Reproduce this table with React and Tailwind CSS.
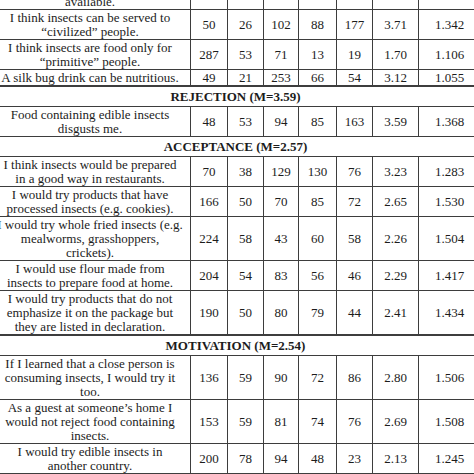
const cols = 'grid grid-cols-[201px_37px_36px_35px_38px_36px_46px_62px]';

const sections = [
  {
    rows: [
      { text: ['\u00a0', '\u00a0', 'available.'], nums: ['', '', '', '', '', '', ''] },
      { text: ['I think insects can be served to', '“civilized” people.'], nums: ['50', '26', '102', '88', '177', '3.71', '1.342'] },
      { text: ['I think insects are food only for', '“primitive” people.'], nums: ['287', '53', '71', '13', '19', '1.70', '1.106'] },
      { text: ['A silk bug drink can be nutritious.'], nums: ['49', '21', '253', '66', '54', '3.12', '1.055'], thick: true },
    ],
  },
  {
    title: 'REJECTION (M=3.59)',
    rows: [
      { text: ['Food containing edible insects', 'disgusts me.'], nums: ['48', '53', '94', '85', '163', '3.59', '1.368'] },
    ],
  },
  {
    title: 'ACCEPTANCE (M=2.57)',
    rows: [
      { text: ['I think insects would be prepared', 'in a good way in restaurants.'], nums: ['70', '38', '129', '130', '76', '3.23', '1.283'] },
      { text: ['I would try products that have', 'processed insects (e.g. cookies).'], nums: ['166', '50', '70', '85', '72', '2.65', '1.530'] },
      { text: ['I would try whole fried insects (e.g.', 'mealworms, grasshoppers,', 'crickets).'], nums: ['224', '58', '43', '60', '58', '2.26', '1.504'] },
      { text: ['I would use flour made from', 'insects to prepare food at home.'], nums: ['204', '54', '83', '56', '46', '2.29', '1.417'] },
      { text: ['I would try products that do not', 'emphasize it on the package but', 'they are listed in declaration.'], nums: ['190', '50', '80', '79', '44', '2.41', '1.434'], thick: true },
    ],
  },
  {
    title: 'MOTIVATION (M=2.54)',
    rows: [
      { text: ['If I learned that a close person is', 'consuming insects, I would try it', 'too.'], nums: ['136', '59', '90', '72', '86', '2.80', '1.506'] },
      { text: ['As a guest at someone’s home I', 'would not reject food containing', 'insects.'], nums: ['153', '59', '81', '74', '76', '2.69', '1.508'] },
      { text: ['I would try edible insects in', 'another country.'], nums: ['200', '78', '94', '48', '23', '2.13', '1.245'] },
    ],
  },
];

const Row = ({ row }) => (
  <div className={`${cols} ${row.thick ? 'border-b-2' : 'border-b'} border-[#3d3d3d]`}>
    <div className="border-r border-[#3d3d3d] pt-px px-1 text-center flex flex-col justify-center">
      {row.text.map((line, i) => (
        <span key={i} className="whitespace-nowrap">{line}</span>
      ))}
    </div>
    {row.nums.map((n, i) => (
      <div key={i} className="border-r border-[#3d3d3d] pt-px flex items-center justify-center">
        {n}
      </div>
    ))}
  </div>
);

export default function App() {
  return (
    <div className="w-[474px] h-[474px] overflow-hidden bg-white">
      <div className="w-[491px] -ml-[10px] -mt-[34px] font-['Liberation_Serif',serif] text-[13px] leading-[14px] text-[#1c1c1c]">
        {sections.map((s, si) => (
          <div key={si}>
            {s.title && (
              <div className="h-[20px] border-b border-[#3d3d3d] flex items-center justify-center font-bold">
                {s.title}
              </div>
            )}
            {s.rows.map((r, ri) => (
              <Row key={ri} row={r} />
            ))}
          </div>
        ))}
      </div>
    </div>
  );
}
